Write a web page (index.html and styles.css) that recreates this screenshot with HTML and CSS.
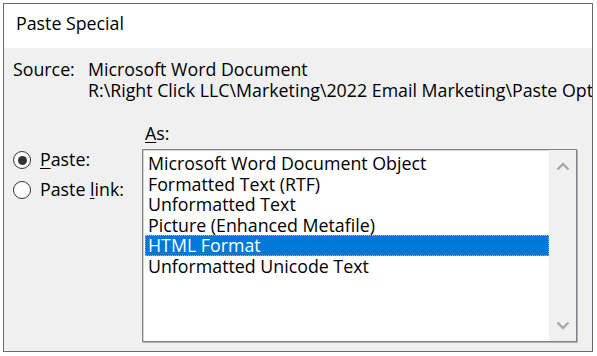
FILE: index.html
```html
<!DOCTYPE html>
<html>
<head>
<meta charset="utf-8">
<link rel="stylesheet" href="styles.css">
</head>
<body>
<div class="dialog">
  <div class="title">Paste Special</div>
  <div class="content">
    <div class="source">
      <span class="lbl">Source:</span>
      <span class="val">Microsoft Word Document</span>
      <span></span>
      <span class="val">R:\Right Click LLC\Marketing\2022 Email Marketing\Paste Options.docx</span>
    </div>
    <div class="lower">
      <div class="options">
        <div class="opt"><span class="radio checked"></span><span><u>P</u>aste:</span></div>
        <div class="opt"><span class="radio"></span><span>Paste <u>l</u>ink:</span></div>
      </div>
      <div class="aspane">
        <div class="as"><u>A</u>s:</div>
        <div class="list">
          <div class="items">
            <div class="item">Microsoft Word Document Object</div>
            <div class="item">Formatted Text (RTF)</div>
            <div class="item">Unformatted Text</div>
            <div class="item">Picture (Enhanced Metafile)</div>
            <div class="item selected">HTML Format</div>
            <div class="item">Unformatted Unicode Text</div>
          </div>
          <div class="scrollbar">
            <div class="sbtn"><svg width="14" height="9" viewBox="0 0 14 9"><polyline points="1.5,7.5 7,2 12.5,7.5" fill="none" stroke="#a6a6a6" stroke-width="2.4"/></svg></div>
            <div class="sbtn"><svg width="14" height="9" viewBox="0 0 14 9"><polyline points="1.5,1.5 7,7 12.5,1.5" fill="none" stroke="#a6a6a6" stroke-width="2.4"/></svg></div>
          </div>
        </div>
      </div>
    </div>
  </div>
</div>
</body>
</html>
```
FILE: styles.css
```css
html, body {
  margin: 0;
  padding: 0;
  background: #ffffff;
}
body {
  font-family: "Open Sans", "Noto Sans", sans-serif;
  color: #000;
}
.dialog {
  margin: 3px 0 0 3px;
  width: 588px;
  height: 347px;
  border: 1px solid #6a6a6a;
  display: flex;
  flex-direction: column;
  overflow: hidden;
}
.title {
  height: 44px;
  flex: none;
  box-sizing: border-box;
  background: #fff;
  padding: 7px 0 0 12px;
  font-size: 17.8px;
  line-height: 24px;
}
.content {
  flex: 1;
  background: #f0f0f0;
  padding: 11px 0 0 9px;
  font-size: 17.8px;
  line-height: 21px;
}
.source {
  display: grid;
  grid-template-columns: 75px auto;
  white-space: nowrap;
}
.lower {
  display: flex;
  margin-top: 22px;
}
.options {
  width: 129px;
  padding-top: 21px;
}
.opt {
  display: flex;
  align-items: center;
  height: 30px;
  line-height: 30px;
  white-space: nowrap;
}
.opt u, .as u {
  text-underline-offset: 2px;
  text-decoration-thickness: 1px;
}
.radio {
  width: 16px;
  height: 16px;
  border: 1.7px solid #333;
  border-radius: 50%;
  background: #fff;
  margin-right: 9px;
  position: relative;
  flex: none;
  margin-top: 2px;
}
.radio.checked::after {
  content: "";
  position: absolute;
  left: 3.5px;
  top: 3.5px;
  width: 9px;
  height: 9px;
  border-radius: 50%;
  background: #333;
}
.aspane {
  display: flex;
  flex-direction: column;
}
.as {
  padding-left: 3px;
}
.list {
  margin-top: 5px;
  width: 435px;
  height: 193px;
  box-sizing: border-box;
  border: 1px solid #7f848c;
  box-shadow: inset 1px 1px 0 #d4d4d4, 1px 1px 0 #b0b0b0;
  background: #fff;
  display: flex;
}
.items {
  flex: 1;
  padding: 3px 0 0 2px;
}
.item {
  height: 20.5px;
  line-height: 20.5px;
  padding-left: 3px;
  white-space: nowrap;
}
.item.selected {
  background: #0078d7;
  color: #fff;
  outline: 1px dotted #f0a040;
  outline-offset: -1px;
}
.scrollbar {
  width: 27px;
  background: #f0f0f0;
  display: flex;
  flex-direction: column;
  justify-content: space-between;
}
.sbtn {
  height: 32px;
  display: flex;
  align-items: center;
  justify-content: center;
}
```
